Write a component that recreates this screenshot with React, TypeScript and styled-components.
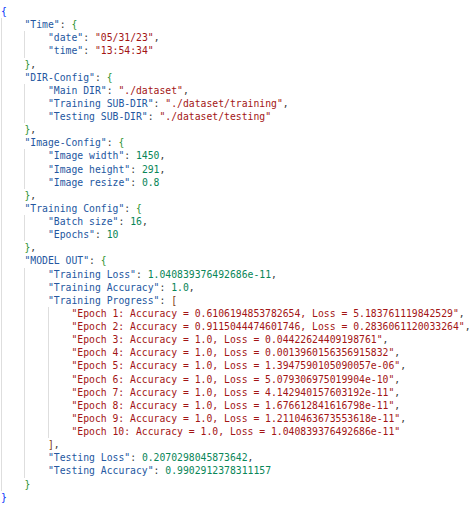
import React from "react";
import styled, { createGlobalStyle } from "styled-components";

const GlobalStyle = createGlobalStyle`
  html, body { margin: 0; padding: 0; background: #ffffff; }
  body { font-family: "DejaVu Sans Mono", "Liberation Mono", monospace; }
`;

type Val =
  | { t: "obj"; e: [string, Val][] }
  | { t: "arr"; i: Val[] }
  | { t: "str"; v: string }
  | { t: "num"; v: string };

const obj = (...e: [string, Val][]): Val => ({ t: "obj", e });
const arr = (...i: Val[]): Val => ({ t: "arr", i });
const s = (v: string): Val => ({ t: "str", v });
const n = (v: string): Val => ({ t: "num", v });

const data: Val = obj(
  ["Time", obj(["date", s("05/31/23")], ["time", s("13:54:34")])],
  [
    "DIR-Config",
    obj(
      ["Main DIR", s("./dataset")],
      ["Training SUB-DIR", s("./dataset/training")],
      ["Testing SUB-DIR", s("./dataset/testing")]
    ),
  ],
  [
    "Image-Config",
    obj(["Image width", n("1450")], ["Image height", n("291")], ["Image resize", n("0.8")]),
  ],
  ["Training Config", obj(["Batch size", n("16")], ["Epochs", n("10")])],
  [
    "MODEL OUT",
    obj(
      ["Training Loss", n("1.040839376492686e-11")],
      ["Training Accuracy", n("1.0")],
      [
        "Training Progress",
        arr(
          s("Epoch 1: Accuracy = 0.6106194853782654, Loss = 5.183761119842529"),
          s("Epoch 2: Accuracy = 0.9115044474601746, Loss = 0.2836061120033264"),
          s("Epoch 3: Accuracy = 1.0, Loss = 0.04422624409198761"),
          s("Epoch 4: Accuracy = 1.0, Loss = 0.0013960156356915832"),
          s("Epoch 5: Accuracy = 1.0, Loss = 1.3947590105090057e-06"),
          s("Epoch 6: Accuracy = 1.0, Loss = 5.079306975019904e-10"),
          s("Epoch 7: Accuracy = 1.0, Loss = 4.142940157603192e-11"),
          s("Epoch 8: Accuracy = 1.0, Loss = 1.676612841616798e-11"),
          s("Epoch 9: Accuracy = 1.0, Loss = 1.2110463673553618e-11"),
          s("Epoch 10: Accuracy = 1.0, Loss = 1.040839376492686e-11")
        ),
      ],
      ["Testing Loss", n("0.2070298045873642")],
      ["Testing Accuracy", n("0.9902912378311157")]
    ),
  ]
);

type Kind = "key" | "str" | "num" | "punc" | "b0" | "b1" | "b2";
type Tok = { text: string; kind: Kind };
type LineData = { indent: number; toks: Tok[] };

const COLORS: Record<Kind, string> = {
  key: "#24579f",
  str: "#a31515",
  num: "#098658",
  punc: "#3b3b3b",
  b0: "#0431fa",
  b1: "#319331",
  b2: "#7b3814",
};

const bracketKind = (depth: number): Kind => (["b0", "b1", "b2"] as Kind[])[depth % 3];

function build(): LineData[] {
  const lines: LineData[] = [];
  const walk = (val: Val, indent: number, prefix: Tok[], suffix: Tok[], depth: number) => {
    if (val.t === "obj" || val.t === "arr") {
      const [open, close] = val.t === "obj" ? ["{", "}"] : ["[", "]"];
      const bk = bracketKind(depth);
      lines.push({ indent, toks: [...prefix, { text: open, kind: bk }] });
      const children: [string | null, Val][] =
        val.t === "obj" ? val.e : val.i.map((v) => [null, v] as [string | null, Val]);
      children.forEach(([k, v], idx) => {
        const last = idx === children.length - 1;
        const pre: Tok[] = k === null ? [] : [{ text: `"${k}"`, kind: "key" }, { text: ": ", kind: "punc" }];
        const suf: Tok[] = last ? [] : [{ text: ",", kind: "punc" }];
        walk(v, indent + 1, pre, suf, depth + 1);
      });
      lines.push({ indent, toks: [{ text: close, kind: bk }, ...suffix] });
    } else {
      const tok: Tok = val.t === "str" ? { text: `"${val.v}"`, kind: "str" } : { text: val.v, kind: "num" };
      lines.push({ indent, toks: [...prefix, tok, ...suffix] });
    }
  };
  walk(data, 0, [], [], 0);
  return lines;
}

const Editor = styled.div`
  padding: 5px 0 0 1px;
  font-family: "DejaVu Sans Mono", "Liberation Mono", monospace;
  font-size: 9.75px;
`;

const Line = styled.div`
  display: flex;
  height: 13.13px;
  line-height: 13.13px;
  white-space: pre;
`;

const Guide = styled.span`
  flex: none;
  box-sizing: border-box;
  width: 4ch;
  border-left: 1px solid #dedede;
`;

const Token = styled.span<{ $kind: Kind }>`
  color: ${(p) => COLORS[p.$kind]};
`;

export default function App() {
  const lines = build();
  return (
    <>
      <GlobalStyle />
      <Editor>
        {lines.map((ln, i) => (
          <Line key={i}>
            {Array.from({ length: ln.indent }).map((_, g) => (
              <Guide key={g} />
            ))}
            {ln.toks.map((t, j) => (
              <Token key={j} $kind={t.kind}>
                {t.text}
              </Token>
            ))}
          </Line>
        ))}
      </Editor>
    </>
  );
}
